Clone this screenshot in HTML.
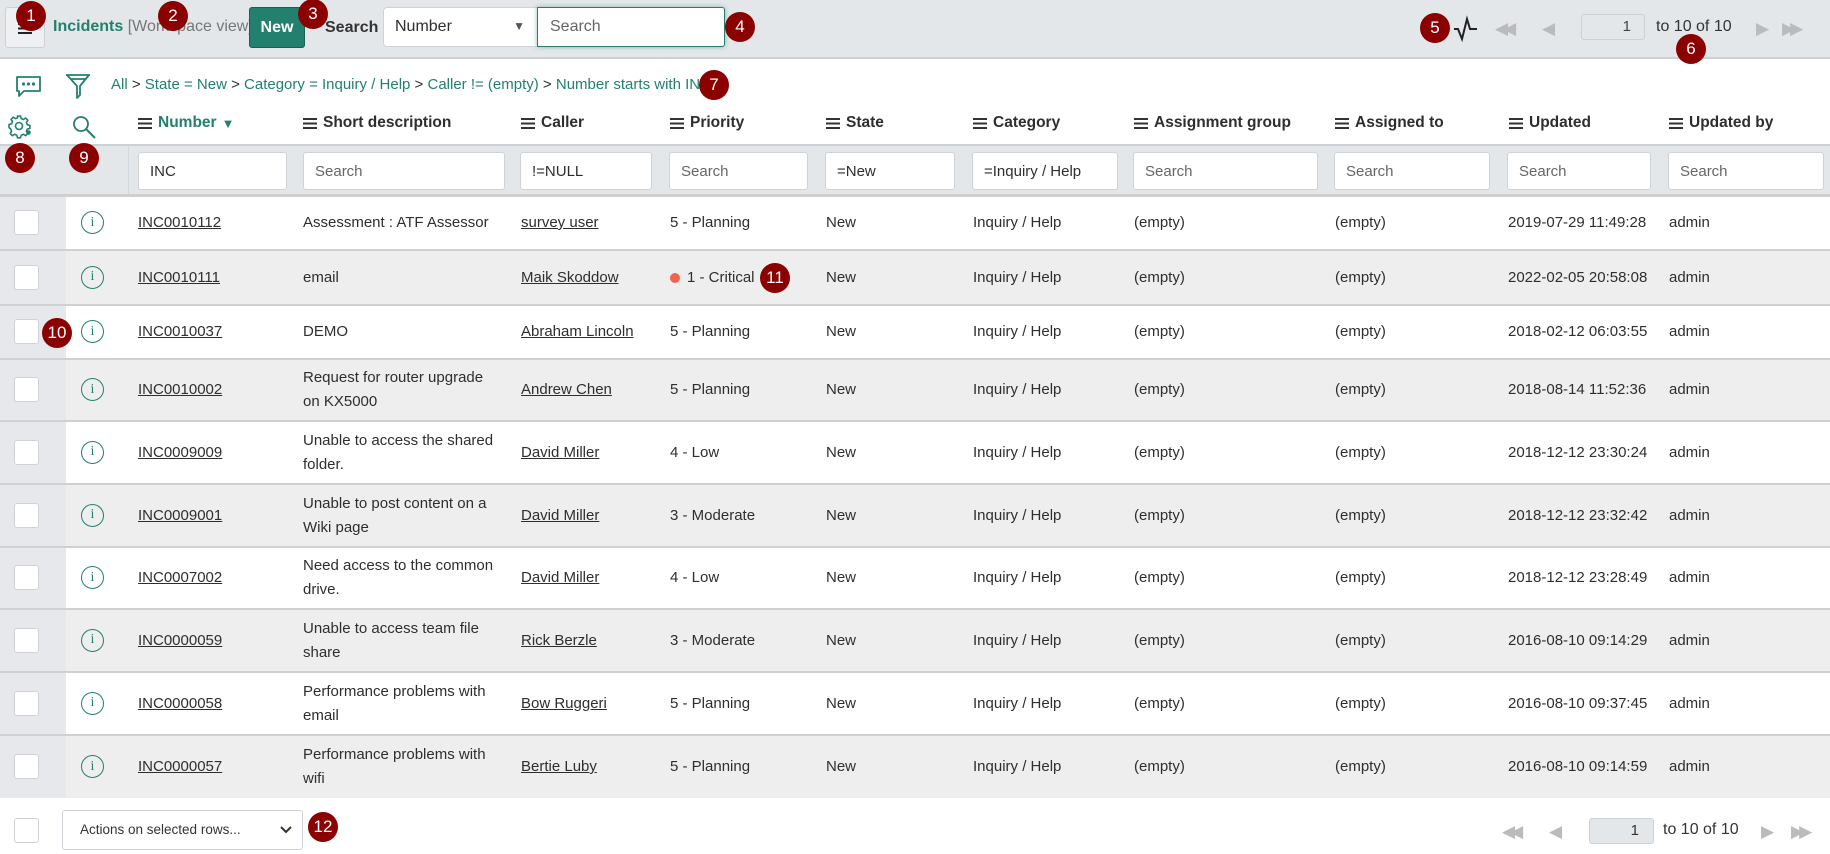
<!DOCTYPE html>
<html><head><meta charset="utf-8">
<style>
*{box-sizing:border-box;margin:0;padding:0}
body{width:1830px;height:854px;position:relative;overflow:hidden;background:#fff;font-family:"Liberation Sans",sans-serif;font-size:15px;color:#2e2e2e}
.a{position:absolute}
.teal{color:#23806f}
.badge{position:absolute;width:30px;height:30px;border-radius:50%;background:#8b0000;color:#fff;font-size:17px;display:flex;align-items:center;justify-content:center;transform:translate(-50%,-50%);z-index:5}
.inp{position:absolute;background:#fff;border:1px solid #cfd3d7;border-radius:3px;height:38px;padding-left:11px;display:flex;align-items:center;font-size:15px;color:#2e2e2e}
.ph{color:#666}
.hd{position:absolute;top:114px;font-weight:bold;font-size:15.5px;display:flex;align-items:center;color:#2e2e2e}
.hb{display:inline-block;width:14px;height:11px;margin-right:6px;background:linear-gradient(#333 0 2px,transparent 2px 4.5px,#333 4.5px 6.5px,transparent 6.5px 9px,#333 9px 11px)}
.row{position:absolute;left:0;width:1830px;border-bottom:2px solid #d0d0d0}
.row.g{background:#eee}
.row .lc{position:absolute;left:0;top:0;bottom:0;width:66px;background:#e6e8eb}
.cell{position:absolute;top:0;bottom:0;display:flex;align-items:center;line-height:24px;font-size:15px}
.cb{position:absolute;left:14px;width:25px;height:25px;background:#fff;border:1px solid #cfd3d7;border-radius:3px;top:50%;margin-top:-13px}
.info{position:absolute;left:81px;width:23px;height:23px;border:1.6px solid #23806f;border-radius:50%;top:50%;margin-top:-12px;color:#23806f;font-size:14px;font-family:"Liberation Serif",serif;display:flex;align-items:center;justify-content:center}
u{text-decoration:underline}
</style></head><body>
<div class="a" style="left:0;top:0;width:1830px;height:59px;background:#e4e7ea;border-bottom:2px solid #cdd1d5"></div>
<div class="a" style="left:5px;top:7px;width:40px;height:41px;background:#eef0f2;border:1px solid #cdd1d5;border-radius:3px"></div>
<div class="a" style="left:18px;top:23px;width:14px;height:11px;background:linear-gradient(#222 0 2px,transparent 2px 4.5px,#222 4.5px 6.5px,transparent 6.5px 9px,#222 9px 11px)"></div>
<div class="a" style="left:53px;top:18px;font-size:16px"><b class="teal">Incidents</b> <span style="color:#777">[Workspace view]</span></div>
<div class="a" style="left:249px;top:7px;width:56px;height:41px;background:#23806f;border:1px solid #1a5f52;border-radius:3px;color:#fff;font-weight:bold;font-size:16px;display:flex;align-items:center;justify-content:center">New</div>
<div class="a" style="left:325px;top:19px;font-weight:bold;font-size:16px;color:#333">Search</div>
<div class="inp" style="left:383px;top:7px;width:155px;height:40px;border-radius:4px 0 0 4px;font-size:16px">Number<span style="position:absolute;right:12px;top:11px;font-size:12px;color:#555">▼</span></div>
<div class="inp" style="left:537px;top:7px;width:188px;height:40px;border:1px solid #23806f;box-shadow:0 0 5px rgba(35,128,111,.5);border-radius:0 3px 3px 0;padding-left:12px"><span class="ph" style="font-size:16px">Search</span></div>
<svg class="a" style="left:1453px;top:14px" width="26" height="28" viewBox="0 0 26 28"><path d="M1 15 L5 15 L9 25 L14 5 L17 15 L24 15" fill="none" stroke="#222" stroke-width="2"/></svg>
<div class="a" style="left:1495px;top:19px;color:#bbb;font-size:17px;letter-spacing:-5px">◀◀</div>
<div class="a" style="left:1542px;top:19px;color:#bbb;font-size:17px">◀</div>
<div class="a" style="left:1581px;top:14px;width:64px;height:26px;background:#e4e7ea;border:1px solid #cdd1d5;border-radius:3px;text-align:right;padding-right:13px;line-height:24px;color:#444;font-size:15px">1</div>
<div class="a" style="left:1656px;top:18px;color:#333;font-size:16px">to 10 of 10</div>
<div class="a" style="left:1756px;top:19px;color:#bbb;font-size:17px">▶</div>
<div class="a" style="left:1782px;top:19px;color:#bbb;font-size:17px;letter-spacing:-5px">▶▶</div>

<svg class="a" style="left:15px;top:75px" width="27" height="24" viewBox="0 0 27 24"><path d="M2 2 H25 V16 H9 L4 21 V16 H2 Z" fill="none" stroke="#23806f" stroke-width="1.8" stroke-linejoin="round"/><circle cx="8.5" cy="9" r="1.6" fill="#23806f"/><circle cx="13.5" cy="9" r="1.6" fill="#23806f"/><circle cx="18.5" cy="9" r="1.6" fill="#23806f"/></svg>
<svg class="a" style="left:65px;top:73px" width="26" height="27" viewBox="0 0 26 27"><path d="M1 2 H25 M2 2 L12 13 V25 L15 22 V13 L24 2 M6 6 H20" fill="none" stroke="#23806f" stroke-width="1.8" stroke-linejoin="round"/></svg>
<div class="a" style="left:111px;top:76px;font-size:15px"><span class="teal">All</span> &gt; <span class="teal">State = New</span> &gt; <span class="teal">Category = Inquiry / Help</span> &gt; <span class="teal">Caller != (empty)</span> &gt; <span class="teal">Number starts with INC</span></div>
<svg class="a" style="left:7px;top:113px" width="28" height="26" viewBox="0 0 28 26"><g fill="none" stroke="#23806f" stroke-width="1.6" stroke-linejoin="round"><circle cx="12" cy="13" r="3.5"/><path d="M10.5 3h3l.7 2.6 2.2.9 2.3-1.4 2.1 2.1-1.4 2.3.9 2.2 2.6.7v3l-2.6.7-.9 2.2 1.4 2.3-2.1 2.1-2.3-1.4-2.2.9-.7 2.6h-3l-.7-2.6-2.2-.9-2.3 1.4-2.1-2.1 1.4-2.3-.9-2.2L2 14.5v-3l2.6-.7.9-2.2-1.4-2.3 2.1-2.1 2.3 1.4 2.2-.9z"/></g><circle cx="21.5" cy="19.5" r="2.3" fill="#23806f"/></svg>
<svg class="a" style="left:72px;top:115px" width="25" height="24" viewBox="0 0 25 24"><circle cx="9" cy="9" r="7" fill="none" stroke="#23806f" stroke-width="1.8"/><path d="M14 14 L23 23" stroke="#23806f" stroke-width="2"/></svg>

<div class="hd teal" style="left:138px;color:#23806f"><span class="hb"></span>Number <span style="font-size:13px;margin-left:5px">▼</span></div>
<div class="hd" style="left:303px"><span class="hb"></span>Short description</div>
<div class="hd" style="left:521px"><span class="hb"></span>Caller</div>
<div class="hd" style="left:670px"><span class="hb"></span>Priority</div>
<div class="hd" style="left:826px"><span class="hb"></span>State</div>
<div class="hd" style="left:973px"><span class="hb"></span>Category</div>
<div class="hd" style="left:1134px"><span class="hb"></span>Assignment group</div>
<div class="hd" style="left:1335px"><span class="hb"></span>Assigned to</div>
<div class="hd" style="left:1509px"><span class="hb"></span>Updated</div>
<div class="hd" style="left:1669px"><span class="hb"></span>Updated by</div>

<div class="a" style="left:0;top:144px;width:1830px;height:53px;background:#e4e7ea;border-top:2px solid #cdd1d5;border-bottom:3px solid #cfcfcf"></div>
<div class="a" style="left:128px;top:146px;width:1px;height:48px;background:#d5d8db"></div>
<div class="inp" style="left:138px;top:152px;width:149px">INC</div>
<div class="inp" style="left:303px;top:152px;width:202px"><span class="ph">Search</span></div>
<div class="inp" style="left:520px;top:152px;width:132px">!=NULL</div>
<div class="inp" style="left:669px;top:152px;width:139px"><span class="ph">Search</span></div>
<div class="inp" style="left:825px;top:152px;width:130px">=New</div>
<div class="inp" style="left:972px;top:152px;width:146px">=Inquiry / Help</div>
<div class="inp" style="left:1133px;top:152px;width:185px"><span class="ph">Search</span></div>
<div class="inp" style="left:1334px;top:152px;width:156px"><span class="ph">Search</span></div>
<div class="inp" style="left:1507px;top:152px;width:144px"><span class="ph">Search</span></div>
<div class="inp" style="left:1668px;top:152px;width:156px"><span class="ph">Search</span></div>

<div class="row" style="top:197px;height:54px"><div class="lc"></div><div class="cb"></div><div class="info">i</div>
<div class="cell" style="left:138px"><u>INC0010112</u></div><div class="cell" style="left:303px">Assessment : ATF Assessor</div><div class="cell" style="left:521px"><u>survey user</u></div><div class="cell" style="left:670px">5 - Planning</div><div class="cell" style="left:826px">New</div><div class="cell" style="left:973px">Inquiry / Help</div><div class="cell" style="left:1134px">(empty)</div><div class="cell" style="left:1335px">(empty)</div><div class="cell" style="left:1508px">2019-07-29 11:49:28</div><div class="cell" style="left:1669px">admin</div></div>
<div class="row g" style="top:251px;height:55px"><div class="lc"></div><div class="cb"></div><div class="info">i</div>
<div class="cell" style="left:138px"><u>INC0010111</u></div><div class="cell" style="left:303px">email</div><div class="cell" style="left:521px"><u>Maik Skoddow</u></div><div class="cell" style="left:670px"><span style="display:inline-block;width:10px;height:10px;border-radius:50%;background:#f4624a;margin-right:7px"></span>1 - Critical</div><div class="cell" style="left:826px">New</div><div class="cell" style="left:973px">Inquiry / Help</div><div class="cell" style="left:1134px">(empty)</div><div class="cell" style="left:1335px">(empty)</div><div class="cell" style="left:1508px">2022-02-05 20:58:08</div><div class="cell" style="left:1669px">admin</div></div>
<div class="row" style="top:306px;height:54px"><div class="lc"></div><div class="cb"></div><div class="info">i</div>
<div class="cell" style="left:138px"><u>INC0010037</u></div><div class="cell" style="left:303px">DEMO</div><div class="cell" style="left:521px"><u>Abraham Lincoln</u></div><div class="cell" style="left:670px">5 - Planning</div><div class="cell" style="left:826px">New</div><div class="cell" style="left:973px">Inquiry / Help</div><div class="cell" style="left:1134px">(empty)</div><div class="cell" style="left:1335px">(empty)</div><div class="cell" style="left:1508px">2018-02-12 06:03:55</div><div class="cell" style="left:1669px">admin</div></div>
<div class="row g" style="top:360px;height:62px"><div class="lc"></div><div class="cb"></div><div class="info">i</div>
<div class="cell" style="left:138px"><u>INC0010002</u></div><div class="cell" style="left:303px">Request for router upgrade<br>on KX5000</div><div class="cell" style="left:521px"><u>Andrew Chen</u></div><div class="cell" style="left:670px">5 - Planning</div><div class="cell" style="left:826px">New</div><div class="cell" style="left:973px">Inquiry / Help</div><div class="cell" style="left:1134px">(empty)</div><div class="cell" style="left:1335px">(empty)</div><div class="cell" style="left:1508px">2018-08-14 11:52:36</div><div class="cell" style="left:1669px">admin</div></div>
<div class="row" style="top:422px;height:63px"><div class="lc"></div><div class="cb"></div><div class="info">i</div>
<div class="cell" style="left:138px"><u>INC0009009</u></div><div class="cell" style="left:303px">Unable to access the shared<br>folder.</div><div class="cell" style="left:521px"><u>David Miller</u></div><div class="cell" style="left:670px">4 - Low</div><div class="cell" style="left:826px">New</div><div class="cell" style="left:973px">Inquiry / Help</div><div class="cell" style="left:1134px">(empty)</div><div class="cell" style="left:1335px">(empty)</div><div class="cell" style="left:1508px">2018-12-12 23:30:24</div><div class="cell" style="left:1669px">admin</div></div>
<div class="row g" style="top:485px;height:63px"><div class="lc"></div><div class="cb"></div><div class="info">i</div>
<div class="cell" style="left:138px"><u>INC0009001</u></div><div class="cell" style="left:303px">Unable to post content on a<br>Wiki page</div><div class="cell" style="left:521px"><u>David Miller</u></div><div class="cell" style="left:670px">3 - Moderate</div><div class="cell" style="left:826px">New</div><div class="cell" style="left:973px">Inquiry / Help</div><div class="cell" style="left:1134px">(empty)</div><div class="cell" style="left:1335px">(empty)</div><div class="cell" style="left:1508px">2018-12-12 23:32:42</div><div class="cell" style="left:1669px">admin</div></div>
<div class="row" style="top:548px;height:62px"><div class="lc"></div><div class="cb"></div><div class="info">i</div>
<div class="cell" style="left:138px"><u>INC0007002</u></div><div class="cell" style="left:303px">Need access to the common<br>drive.</div><div class="cell" style="left:521px"><u>David Miller</u></div><div class="cell" style="left:670px">4 - Low</div><div class="cell" style="left:826px">New</div><div class="cell" style="left:973px">Inquiry / Help</div><div class="cell" style="left:1134px">(empty)</div><div class="cell" style="left:1335px">(empty)</div><div class="cell" style="left:1508px">2018-12-12 23:28:49</div><div class="cell" style="left:1669px">admin</div></div>
<div class="row g" style="top:610px;height:63px"><div class="lc"></div><div class="cb"></div><div class="info">i</div>
<div class="cell" style="left:138px"><u>INC0000059</u></div><div class="cell" style="left:303px">Unable to access team file<br>share</div><div class="cell" style="left:521px"><u>Rick Berzle</u></div><div class="cell" style="left:670px">3 - Moderate</div><div class="cell" style="left:826px">New</div><div class="cell" style="left:973px">Inquiry / Help</div><div class="cell" style="left:1134px">(empty)</div><div class="cell" style="left:1335px">(empty)</div><div class="cell" style="left:1508px">2016-08-10 09:14:29</div><div class="cell" style="left:1669px">admin</div></div>
<div class="row" style="top:673px;height:63px"><div class="lc"></div><div class="cb"></div><div class="info">i</div>
<div class="cell" style="left:138px"><u>INC0000058</u></div><div class="cell" style="left:303px">Performance problems with<br>email</div><div class="cell" style="left:521px"><u>Bow Ruggeri</u></div><div class="cell" style="left:670px">5 - Planning</div><div class="cell" style="left:826px">New</div><div class="cell" style="left:973px">Inquiry / Help</div><div class="cell" style="left:1134px">(empty)</div><div class="cell" style="left:1335px">(empty)</div><div class="cell" style="left:1508px">2016-08-10 09:37:45</div><div class="cell" style="left:1669px">admin</div></div>
<div class="row g" style="top:736px;height:62px;border-bottom:none"><div class="lc"></div><div class="cb"></div><div class="info">i</div>
<div class="cell" style="left:138px"><u>INC0000057</u></div><div class="cell" style="left:303px">Performance problems with<br>wifi</div><div class="cell" style="left:521px"><u>Bertie Luby</u></div><div class="cell" style="left:670px">5 - Planning</div><div class="cell" style="left:826px">New</div><div class="cell" style="left:973px">Inquiry / Help</div><div class="cell" style="left:1134px">(empty)</div><div class="cell" style="left:1335px">(empty)</div><div class="cell" style="left:1508px">2016-08-10 09:14:59</div><div class="cell" style="left:1669px">admin</div></div>

<div class="a" style="left:14px;top:818px;width:25px;height:25px;border:1px solid #cfd3d7;border-radius:3px"></div>
<div class="a" style="left:62px;top:810px;width:241px;height:40px;border:1px solid #cfd3d7;border-radius:3px;padding-left:17px;line-height:38px;font-size:13.5px;color:#333">Actions on selected rows...<svg style="position:absolute;right:10px;top:15px" width="12" height="8" viewBox="0 0 12 8"><path d="M1 1 L6 6 L11 1" fill="none" stroke="#333" stroke-width="2"/></svg></div>
<div class="a" style="left:1502px;top:822px;color:#bbb;font-size:17px;letter-spacing:-5px">◀◀</div>
<div class="a" style="left:1549px;top:822px;color:#bbb;font-size:17px">◀</div>
<div class="a" style="left:1589px;top:818px;width:65px;height:26px;background:#e4e7ea;border:1px solid #cdd1d5;border-radius:3px;text-align:right;padding-right:14px;line-height:24px;color:#333;font-size:15px">1</div>
<div class="a" style="left:1663px;top:821px;color:#333;font-size:16px">to 10 of 10</div>
<div class="a" style="left:1761px;top:822px;color:#bbb;font-size:17px">▶</div>
<div class="a" style="left:1791px;top:822px;color:#bbb;font-size:17px;letter-spacing:-5px">▶▶</div>

<div class="badge" style="left:31px;top:16px">1</div>
<div class="badge" style="left:173px;top:16px">2</div>
<div class="badge" style="left:313px;top:14px">3</div>
<div class="badge" style="left:740px;top:27px">4</div>
<div class="badge" style="left:1435px;top:28px">5</div>
<div class="badge" style="left:1691px;top:49px">6</div>
<div class="badge" style="left:714px;top:85px">7</div>
<div class="badge" style="left:20px;top:158px">8</div>
<div class="badge" style="left:84px;top:158px">9</div>
<div class="badge" style="left:57px;top:333px">10</div>
<div class="badge" style="left:775px;top:278px">11</div>
<div class="badge" style="left:323px;top:827px">12</div>
</body></html>
